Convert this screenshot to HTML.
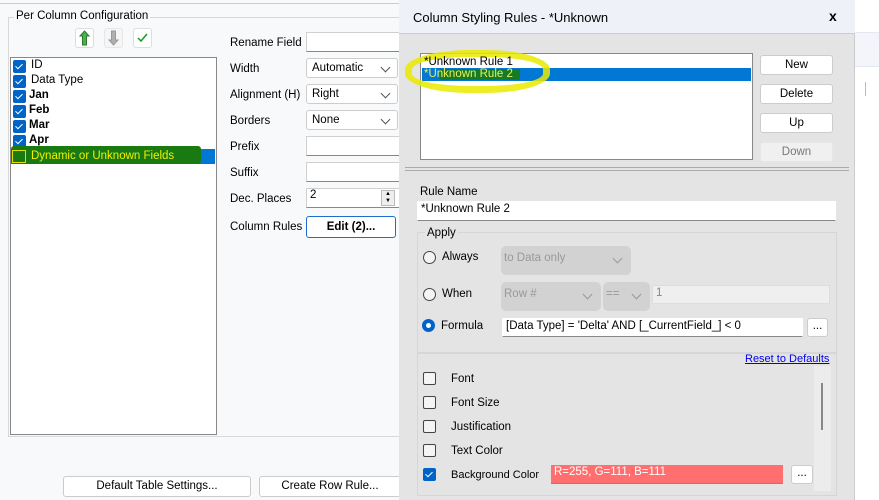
<!DOCTYPE html>
<html><head><style>
*{box-sizing:border-box;margin:0;padding:0}
body{width:879px;height:500px;position:relative;overflow:hidden;background:#f8f9fb;font-family:"Liberation Sans",sans-serif;font-size:11.5px;color:#000}
.a{position:absolute}
.inp{position:absolute;background:#fff;border:1px solid #d0d0d0;border-bottom:1px solid #888;padding:1px 3px;font-size:11.5px;white-space:nowrap}
.sel{position:absolute;background:#fff;border:1px solid #ccc;border-radius:3px;padding:3px 5px;font-size:11.5px}
.sel:after{content:"";position:absolute;right:8px;top:5px;width:6px;height:6px;border-right:1px solid #555;border-bottom:1px solid #555;transform:rotate(45deg)}
.btn{position:absolute;background:#fff;border:1px solid #ccc;border-radius:3px;text-align:center;font-size:11.5px}
.cb{position:absolute;width:13px;height:13px;background:#0063c8;border-radius:2px}
.cb:after{content:"";position:absolute;left:4px;top:2px;width:3px;height:6px;border-right:1px solid #fff;border-bottom:1px solid #fff;transform:rotate(45deg)}
.ucb{position:absolute;width:13px;height:13px;border:1px solid #444;border-radius:2px;background:#f4f4f4}
.rad{position:absolute;width:13px;height:13px;border:1px solid #444;border-radius:50%;background:#f4f4f4}
.dis{position:absolute;background:#d2d2d2;border-radius:5px;color:#999;padding:6px 3px;font-size:11.5px}
.dis:after{content:"";position:absolute;right:10px;top:9px;width:6px;height:6px;border-right:1px solid #999;border-bottom:1px solid #999;transform:rotate(45deg)}
</style></head><body>
<div class="a" style="left:0;top:0;width:400px;height:4px;border-bottom:1px solid #ccc"></div>
<div class="a" style="left:8px;top:17px;width:400px;height:420px;border:1px solid #d8d8d8"></div>
<div class="a" style="left:14px;top:10px;background:#f8f9fb;padding:0 2px">Per Column Configuration</div>
<div class="btn" style="left:75px;top:28px;width:19px;height:20px;border-color:#ddd"><svg width="17" height="18"><path d="M8.5 2 L13 7 H10.5 V16 H6.5 V7 H4 Z" fill="#4caf50" stroke="#2d7a2d"/></svg></div>
<div class="btn" style="left:104px;top:28px;width:19px;height:20px;border-color:#e6e6e6;background:#f6f6f6"><svg width="17" height="18"><path d="M8.5 16 L13 11 H10.5 V2 H6.5 V11 H4 Z" fill="#b0b0b0" stroke="#999"/></svg></div>
<div class="btn" style="left:133px;top:28px;width:19px;height:20px;border-color:#ddd"><svg width="17" height="18"><path d="M4 9 L7 12 L13 5" fill="none" stroke="#1a9a1a" stroke-width="1.5"/></svg></div>
<div class="a" style="left:10px;top:57px;width:207px;height:378px;background:#fff;border:1px solid #888"></div>
<div class="cb" style="left:13px;top:60px"></div><div class="a" style="left:31px;top:59px">ID</div>
<div class="cb" style="left:13px;top:75px"></div><div class="a" style="left:31px;top:74px">Data Type</div>
<div class="cb" style="left:13px;top:90px"></div><div class="a" style="left:29px;top:89px;font-weight:bold">Jan</div>
<div class="cb" style="left:13px;top:105px"></div><div class="a" style="left:29px;top:104px;font-weight:bold">Feb</div>
<div class="cb" style="left:13px;top:120px"></div><div class="a" style="left:29px;top:119px;font-weight:bold">Mar</div>
<div class="cb" style="left:13px;top:135px"></div><div class="a" style="left:29px;top:134px;font-weight:bold">Apr</div>
<div class="a" style="left:11px;top:149px;width:204px;height:15px;background:#0078d4"></div>
<div class="a" style="left:11px;top:146px;width:190px;height:18px;background:#1a7a12;border-radius:3px"></div>
<div class="a" style="left:12px;top:150px;width:14px;height:13px;border:1px solid #e0e000"></div>
<div class="a" style="left:31px;top:150px;color:#f0f000">Dynamic or Unknown Fields</div>
<div class="a" style="left:230px;top:37px">Rename Field</div><div class="inp" style="left:306px;top:32px;width:94px;height:20px"></div>
<div class="a" style="left:230px;top:63px">Width</div><div class="sel" style="left:306px;top:58px;width:92px;height:20px">Automatic</div>
<div class="a" style="left:230px;top:89px">Alignment (H)</div><div class="sel" style="left:306px;top:84px;width:92px;height:20px">Right</div>
<div class="a" style="left:230px;top:115px">Borders</div><div class="sel" style="left:306px;top:110px;width:92px;height:20px">None</div>
<div class="a" style="left:230px;top:141px">Prefix</div><div class="inp" style="left:306px;top:136px;width:94px;height:20px"></div>
<div class="a" style="left:230px;top:167px">Suffix</div><div class="inp" style="left:306px;top:162px;width:94px;height:20px"></div>
<div class="a" style="left:230px;top:193px">Dec. Places</div><div class="inp" style="left:306px;top:188px;width:94px;height:20px;padding-top:0">2</div>
<div class="a" style="left:381px;top:190px;width:14px;height:16px;background:#eee;border:1px solid #bbb;font-size:6px;line-height:7px;text-align:center">▲<br>▼</div>
<div class="a" style="left:230px;top:221px">Column Rules</div>
<div class="btn" style="left:306px;top:216px;width:90px;height:22px;border-color:#1e6ecf;font-weight:bold;line-height:20px">Edit (2)...</div>
<div class="btn" style="left:63px;top:476px;width:188px;height:21px;line-height:19px">Default Table Settings...</div>
<div class="btn" style="left:259px;top:476px;width:142px;height:21px;line-height:19px">Create Row Rule...</div>
<div class="a" style="left:855px;top:0;width:24px;height:500px;background:#fff"></div>
<div class="a" style="left:855px;top:32px;width:24px;height:35px;background:#f3f5fa;border-top:1px solid #e4e8f0;border-bottom:1px solid #e4e8f0"></div>
<div class="a" style="left:865px;top:82px;width:1px;height:14px;background:#bbb"></div>
<div class="a" style="left:399px;top:0;width:456px;height:500px;background:#e4e4e4;border-right:1px solid #ccc"></div>
<div class="a" style="left:399px;top:0;width:456px;height:34px;background:#eef2f8;border-bottom:1px solid #ccc"></div>
<div class="a" style="left:413px;top:10px;font-size:13px">Column Styling Rules - *Unknown</div>
<div class="a" style="left:829px;top:8px;font-size:14px;font-weight:bold">x</div>
<div class="a" style="left:420px;top:53px;width:333px;height:107px;background:#fff;border:1px solid #888"></div>
<div class="a" style="left:422px;top:68px;width:329px;height:13px;background:#0078d4"></div>
<div class="a" style="left:405px;top:50px;width:145px;height:43px;border:7px solid #eaea00;border-radius:45%;opacity:.85"></div>
<div class="a" style="left:440px;top:69px;width:80px;height:11px;background:#1a7a12;opacity:.9"></div>
<div class="a" style="left:424px;top:56px">*Unknown Rule 1</div>
<div class="a" style="left:424px;top:68px;color:#e8f060">*Unknown Rule 2</div>
<div class="btn" style="left:760px;top:55px;width:73px;height:20px;line-height:18px">New</div>
<div class="btn" style="left:760px;top:84px;width:73px;height:20px;line-height:18px">Delete</div>
<div class="btn" style="left:760px;top:113px;width:73px;height:20px;line-height:18px">Up</div>
<div class="btn" style="left:760px;top:142px;width:73px;height:20px;line-height:18px;background:#f0f0f0;border-color:#e6e6e6;color:#777">Down</div>
<div class="a" style="left:405px;top:167px;width:444px;height:4px;border-top:1px solid #aaa;border-bottom:1px solid #aaa"></div>
<div class="a" style="left:420px;top:186px">Rule Name</div>
<div class="inp" style="left:417px;top:201px;width:419px;height:20px;border-color:#fff;border-bottom-color:#888">*Unknown Rule 2</div>
<div class="a" style="left:417px;top:232px;width:420px;height:121px;border:1px solid #d6d6d6"></div>
<div class="a" style="left:425px;top:227px;background:#e4e4e4;padding:0 2px">Apply</div>
<div class="rad" style="left:423px;top:251px"></div><div class="a" style="left:442px;top:251px">Always</div>
<div class="dis" style="left:501px;top:246px;width:130px;height:29px">to Data only</div>
<div class="rad" style="left:423px;top:288px"></div><div class="a" style="left:442px;top:288px">When</div>
<div class="dis" style="left:501px;top:282px;width:100px;height:29px">Row #</div>
<div class="dis" style="left:603px;top:282px;width:47px;height:29px">==</div>
<div class="inp" style="left:652px;top:285px;width:178px;height:19px;background:#efefef;border-color:#ddd;color:#888">1</div>
<div class="a" style="left:422px;top:319px;width:13px;height:13px;border-radius:50%;background:#0063c8"></div>
<div class="a" style="left:426px;top:323px;width:5px;height:5px;border-radius:50%;background:#fff"></div>
<div class="a" style="left:441px;top:320px">Formula</div>
<div class="inp" style="left:502px;top:318px;width:301px;height:19px;border-color:#fff;border-bottom-color:#888">[Data Type] = 'Delta' AND [_CurrentField_] &lt; 0</div>
<div class="btn" style="left:807px;top:318px;width:21px;height:19px;line-height:15px">...</div>
<div class="a" style="left:417px;top:353px;width:420px;height:143px;border:1px solid #d6d6d6"></div>
<div class="a" style="left:745px;top:353px;color:#0000ee;text-decoration:underline;font-size:11px">Reset to Defaults</div>
<div class="a" style="left:814px;top:366px;width:17px;height:125px;background:#ececec"></div>
<div class="a" style="left:821px;top:383px;width:2px;height:47px;background:#888"></div>
<div class="ucb" style="left:423px;top:372px"></div><div class="a" style="left:451px;top:373px">Font</div>
<div class="ucb" style="left:423px;top:396px"></div><div class="a" style="left:451px;top:397px">Font Size</div>
<div class="ucb" style="left:423px;top:420px"></div><div class="a" style="left:451px;top:421px">Justification</div>
<div class="ucb" style="left:423px;top:444px"></div><div class="a" style="left:451px;top:445px">Text Color</div>
<div class="cb" style="left:423px;top:468px"></div><div class="a" style="left:451px;top:469px;font-size:11px">Background Color</div>
<div class="a" style="left:551px;top:465px;width:232px;height:19px;background:#ff6f6f;border-bottom:1px solid #888;color:#fff;padding:1px 3px">R=255, G=111, B=111</div>
<div class="btn" style="left:791px;top:465px;width:22px;height:19px;line-height:15px">...</div>
</body></html>
